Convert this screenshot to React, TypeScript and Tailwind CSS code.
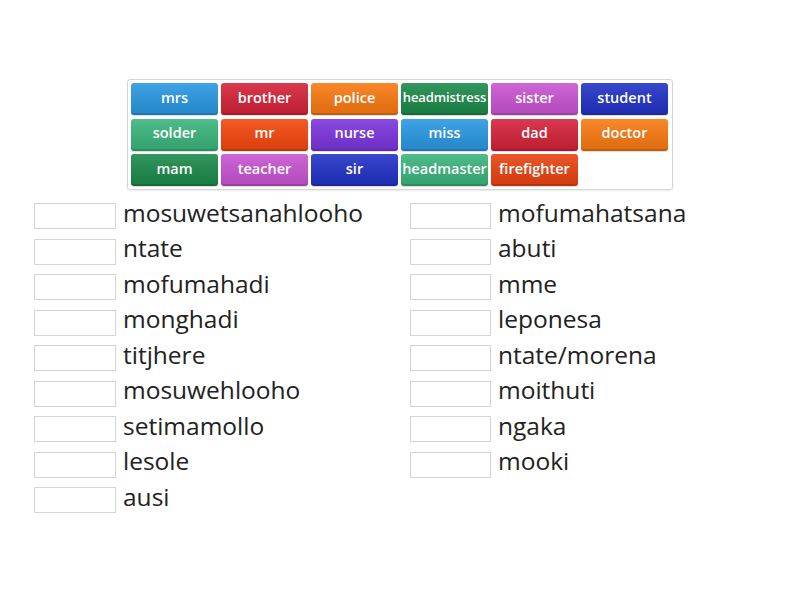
import React from "react";

type Tile = { t: string; c: string; small?: boolean };

const tiles: Tile[] = [
  { t: "mrs", c: "bg-[#2b99e3]" },
  { t: "brother", c: "bg-[#d5243a]" },
  { t: "police", c: "bg-[#fb7a14]" },
  { t: "headmistress", c: "bg-[#1d8b4b]", small: true },
  { t: "sister", c: "bg-[#ca55d4]" },
  { t: "student", c: "bg-[#2334c8]" },
  { t: "solder", c: "bg-[#3bb67c]" },
  { t: "mr", c: "bg-[#f4480f]" },
  { t: "nurse", c: "bg-[#7b36de]" },
  { t: "miss", c: "bg-[#2b99e3]" },
  { t: "dad", c: "bg-[#d5243a]" },
  { t: "doctor", c: "bg-[#fb7a14]" },
  { t: "mam", c: "bg-[#1d8b4b]" },
  { t: "teacher", c: "bg-[#ca55d4]" },
  { t: "sir", c: "bg-[#2334c8]" },
  { t: "headmaster", c: "bg-[#3bb67c]" },
  { t: "firefighter", c: "bg-[#ea4513]" },
];

const left = [
  "mosuwetsanahlooho",
  "ntate",
  "mofumahadi",
  "monghadi",
  "titjhere",
  "mosuwehlooho",
  "setimamollo",
  "lesole",
  "ausi",
];
const right = [
  "mofumahatsana",
  "abuti",
  "mme",
  "leponesa",
  "ntate/morena",
  "moithuti",
  "ngaka",
  "mooki",
];

function Row({ w, boxW }: { w: string; boxW: string }) {
  return (
    <div className="flex items-center h-[26px] mb-[9.5px]">
      <div className={`${boxW} h-[26px] border border-[#d4d4d4] bg-white shrink-0`} />
      <span className="ml-[7px] text-[24.5px] leading-none text-[#222] -mt-[6px]">{w}</span>
    </div>
  );
}

export default function App() {
  return (
    <div
      className="w-[800px] h-[600px] bg-white relative"
      style={{ fontFamily: '"Open Sans", "Noto Sans", sans-serif' }}
    >
      <div className="pt-[79px] flex justify-center">
        <div className="w-[546px] border border-[#d6d6d6] rounded-[3px] p-[3px] shadow-[0_1px_2px_rgba(0,0,0,0.08)]">
          <div className="grid grid-cols-[repeat(6,87px)] gap-x-[3px] gap-y-[3.5px]">
            {tiles.map((x) => (
              <div
                key={x.t}
                className={`${x.c} bg-linear-to-b from-white/10 to-black/10 h-[32px] rounded-[3px] flex items-center justify-center text-white font-semibold shadow-[inset_0_-2px_0_rgba(0,0,0,0.15),0_1px_1px_rgba(0,0,0,0.15)] ${x.small ? "text-[13px] tracking-[-0.1px]" : "text-[14.5px]"}`}
              >
                <span className="-mt-[3px]">{x.t}</span>
              </div>
            ))}
          </div>
        </div>
      </div>
      <div className="flex mt-[13px] pl-[34px]">
        <div className="w-[376px]">
          {left.map((w) => (
            <Row key={w} w={w} boxW="w-[82px]" />
          ))}
        </div>
        <div>
          {right.map((w) => (
            <Row key={w} w={w} boxW="w-[81px]" />
          ))}
        </div>
      </div>
    </div>
  );
}
